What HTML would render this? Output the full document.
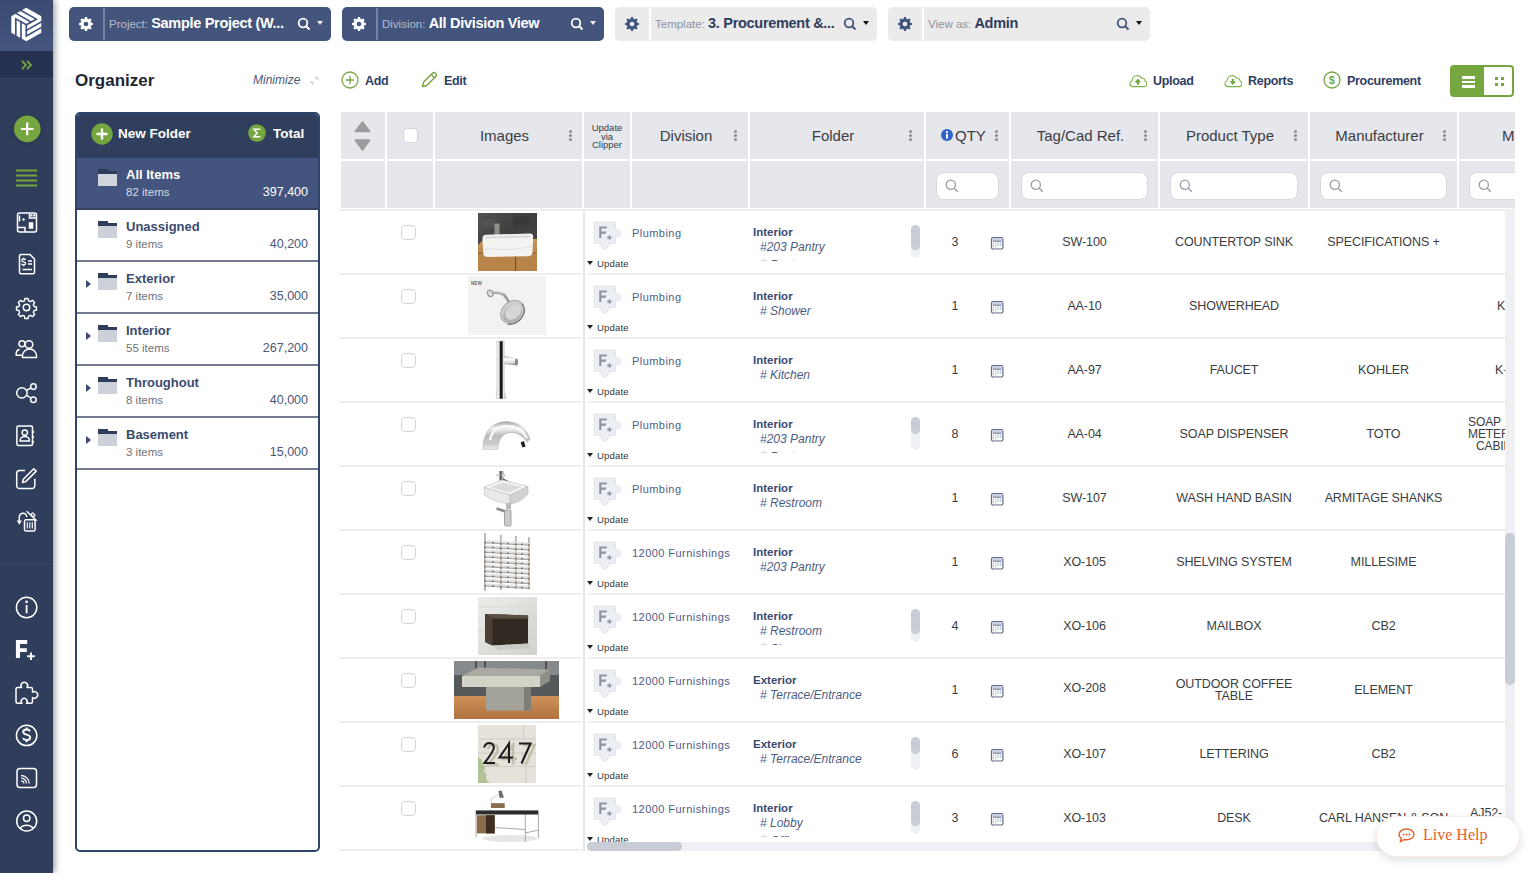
<!DOCTYPE html>
<html><head><meta charset="utf-8">
<style>
*{box-sizing:border-box;margin:0;padding:0}
html,body{width:1536px;height:873px;overflow:hidden;background:#fff;font-family:"Liberation Sans",sans-serif;color:#2b2f38}
.abs{position:absolute}
#sb{position:absolute;left:0;top:0;width:53px;height:873px;background:#303e5c;box-shadow:2px 0 6px rgba(0,0,0,.38);z-index:5}
#sb .logo{position:absolute;left:0;top:0;width:53px;height:51px;background:linear-gradient(#3a4a70,#44567f)}
#sb .band{position:absolute;left:0;top:51px;width:53px;height:27px;background:#253250}
#sb svg{position:absolute}
.pill{position:absolute;top:7px;height:34px;width:262px;border-radius:5px;background:#44557d}
.pill.l{background:#ebebeb}
.pill .gear{position:absolute;left:9px;top:8.5px}
.pill .div{position:absolute;left:34px;top:1px;width:2px;height:32px;background:#7483a3}
.pill.l .div{background:#fff}
.pill .lab{position:absolute;left:40px;top:8px;font-size:11.5px;color:#b4bdd0;white-space:nowrap}
.pill.l .lab{color:#8a93a5}
.pill .val{font-size:14.5px;letter-spacing:-0.3px;font-weight:bold;color:#fff;margin-left:0px}
.pill.l .val{color:#2f3e5f}
.pill .srch{position:absolute;left:228px;top:10px}
.pill .car{position:absolute;left:247.5px;top:14px;width:0;height:0;border-left:3.4px solid transparent;border-right:3.4px solid transparent;border-top:4.2px solid #f0f1f5}
.pill.l .car{border-top-color:#111}
.tb{position:absolute;top:74px;font-size:12.5px;letter-spacing:-0.3px;font-weight:bold;color:#2f3e5f;white-space:nowrap}
.hd{font-size:15px;color:#3a3d44;white-space:nowrap}
.upd{font-size:9.5px;letter-spacing:.2px;color:#333;white-space:nowrap}
.dv{font-size:11px;letter-spacing:.45px;color:#4b5d85;white-space:nowrap}
.fb{font-size:11.5px;font-weight:bold;color:#3a4a70;white-space:nowrap}
.fi{font-size:12px;font-style:italic;color:#4b5d85;white-space:nowrap}
.cell{font-size:12.5px;letter-spacing:-0.1px;color:#3a3d42;white-space:nowrap}
.cell.ml{line-height:11px;white-space:normal}
</style></head><body>

<div id="sb">
  <div class="logo"></div>
  <div class="band"></div>
<!--SB START-->
<svg style="position:absolute;left:0;top:0" width="53" height="873" viewBox="0 0 53 873"><defs><filter id="bl" x="-50%" y="-50%" width="200%" height="200%"><feGaussianBlur stdDeviation="1.5"/></filter></defs>
<g transform="translate(11.3,7.8)">
 <path d="M15 0 30 8.5V25L15 33.5 0 25V8.5z" fill="#fff"/>
 <g fill="none" stroke="#40527b" stroke-width="1.7" stroke-linecap="square">
  <path d="M4.5 28V11.05L15 17V28.3L30.5 19.5"/>
  <path d="M9.7 14V31"/>
  <path d="M15 22.6 30.5 13.8"/>
  <path d="M15 17 25 11.33 9.6 2.6"/>
  <path d="M19.8 14.3 4.6 5.5"/>
 </g>
</g>
<path d="M22 61l4 4-4 4M27 61l4 4-4 4" fill="none" stroke="#75a640" stroke-width="1.8"/>
<circle cx="27.3" cy="129.5" r="15" fill="#1f2a40" opacity=".35" filter="url(#bl)"/>
<circle cx="27.3" cy="128.9" r="13.3" fill="#75a640"/>
<path d="M27.2 122.6v12.7M20.9 129h12.7" stroke="#fff" stroke-width="2.2"/>
<path d="M16 170.5h21M16 175.5h21M16 180.5h21M16 185.5h21" stroke="#75a640" stroke-width="2"/>
<g fill="none" stroke="#fff" stroke-width="1.5">
 <rect x="17.5" y="213" width="19" height="19" rx="2"/>
 <path d="M19.5 215.5v6M17.5 227.5h7.5v4.5M29.5 213.5v4.5h6.5"/><rect x="30.3" y="214.3" width="2.2" height="2.2" fill="#fff" stroke="none"/><rect x="33.2" y="214.3" width="2.2" height="2.2" fill="#fff" stroke="none"/>
 <rect x="29.5" y="223" width="3" height="5" fill="#fff"/>
</g>
<circle cx="23.5" cy="219.5" r="1.2" fill="#fff"/>
<g fill="none" stroke="#fff" stroke-width="1.5">
 <path d="M21 254.5h9l4.5 4.5v13.2a1.5 1.5 0 0 1-1.5 1.5H21a1.5 1.5 0 0 1-1.5-1.5V256a1.5 1.5 0 0 1 1.5-1.5z"/>
 <path d="M28 261h4M28 264h4M22.5 269.5h9.5"/>
</g>
<path d="M25.6 260a2 1.6 0 0 0-1.9-1c-1.1 0-1.9.6-1.9 1.4 0 2 3.8 1 3.8 3 0 .9-.9 1.4-2 1.4a2 1.6 0 0 1-2-1.1M23.7 257.5v1.4M23.7 264.8v1.4" fill="none" stroke="#fff" stroke-width="1.3"/>
<g fill="none" stroke="#fff" stroke-width="1.5">
<g transform="translate(26.5 307.6) scale(.9) translate(-26.5 -307.6)"> <path d="M24.8 297.5h3.4l.6 2.6 2 .9 2.3-1.4 2.4 2.4-1.4 2.3.9 2 2.6.6v3.4l-2.6.6-.9 2 1.4 2.3-2.4 2.4-2.3-1.4-2 .9-.6 2.6h-3.4l-.6-2.6-2-.9-2.3 1.4-2.4-2.4 1.4-2.3-.9-2-2.6-.6v-3.4l2.6-.6.9-2-1.4-2.3 2.4-2.4 2.3 1.4 2-.9z" stroke-linejoin="round" stroke-width="1.65"/>
 <circle cx="26.5" cy="307.6" r="3.6" stroke-width="1.65"/></g>
 <circle cx="22" cy="343.8" r="3"/>
 <path d="M19.5 349.2a5 5 0 0 0-3.3 4.8v1.3h6"/>
 <circle cx="29" cy="344.5" r="3.8"/>
 <path d="M22.5 357.5v-1.5a7 7 0 0 1 14 0v1.5z"/>
 <circle cx="21.9" cy="392.9" r="5.2"/>
 <circle cx="33.4" cy="386.6" r="2.8"/>
 <circle cx="33.4" cy="399.7" r="2.8"/>
 <path d="M26.5 390.4 30.8 388M26.5 395.4 30.8 397.8"/>
 <rect x="16.9" y="426" width="15.6" height="19.5" rx="1.5"/>
 <path d="M33 431v1.8M33 436v1.8M33 441v1.8" stroke-width="2.2"/>
 <circle cx="24.8" cy="432.6" r="2.7"/>
 <path d="M20.2 441v-.6a4.6 4 0 0 1 9.2 0v.6z"/>
 <path d="M25 470.5h-5.5a2.8 2.8 0 0 0-2.8 2.8v12.5a2.8 2.8 0 0 0 2.8 2.8H32a2.8 2.8 0 0 0 2.8-2.8v-7"/>
 <path d="M22.5 482.5l.8-3.3 10.5-10.5 2.4 2.4-10.5 10.5z" stroke-linejoin="round"/>
 <path d="M26.7 517a3.7 3.7 0 0 0-7.4 0v4"/>
 <rect x="24.5" y="519.8" width="10.6" height="11.3" rx="1.6"/>
 <path d="M27.3 522.3v6.3M29.8 522.3v6.3M32.3 522.3v6.3" stroke-width="1.1"/>
 <path d="M26.6 511.3l10.2 9.5"/>
 <rect x="31.3" y="513.6" width="3.6" height="2.4" rx=".6" transform="rotate(43 33.1 514.8)" stroke-width="1.1"/>
</g>
<path d="M16.7 520.6h5.2l-2.6 4.2z" fill="#fff"/>
<g fill="none" stroke="#fff" stroke-width="1.5">
</g>
<rect x="0" y="563.5" width="53" height="1" fill="#3a4866"/>
<g fill="none" stroke="#fff" stroke-width="1.5">
 <circle cx="26.6" cy="607.5" r="10.2"/>
 <path d="M26.6 605v8.3" stroke-width="1.8"/>
 <circle cx="26.6" cy="601.8" r=".6" stroke-width="1.6"/>
</g>
<path d="M15.9 640h11.3v3.9H20v4.3h6.8v3.7H20V658h-4.1z" fill="#fff"/>
<path d="M31 652.5v7.5M27.2 656.3h7.6" stroke="#fff" stroke-width="1.9"/>
<path d="M16 701.8V689a1.5 1.5 0 0 1 1.5-1.5h4.1a3.3 3.3 0 1 1 5.4 0H31a1.5 1.5 0 0 1 1.5 1.5v3.2a3.3 3.3 0 1 1 0 5.4v4.2a1.5 1.5 0 0 1-1.5 1.5h-4.5a3 3 0 1 0-4.6 0h-4.4a1.5 1.5 0 0 1-1.5-1.5z" fill="none" stroke="#fff" stroke-width="1.5" stroke-linejoin="round"/>
<g fill="none" stroke="#fff" stroke-width="1.5">
 <circle cx="26.6" cy="735.4" r="10.2"/>
 <path d="M30 731.3a3.3 2.8 0 0 0-3.4-1.8c-2 0-3.4 1-3.4 2.5 0 3.5 7 1.7 7 5.4 0 1.5-1.5 2.6-3.6 2.6a3.6 3 0 0 1-3.6-2" stroke-width="1.9"/>
 <path d="M26.6 727.5v2M26.6 739.8v2.5" stroke-width="1.9"/>
 <rect x="17" y="768.5" width="19.5" height="19" rx="3"/>
 <path d="M21.2 775.5a8 8 0 0 1 8 8" stroke-width="1.3"/>
 <path d="M21.2 778.2a5.3 5.3 0 0 1 5.3 5.3" stroke-width="1.3"/>
 <path d="M21.2 780.8a2.7 2.7 0 0 1 2.7 2.7" stroke-width="1.3"/>
 <circle cx="26.7" cy="821" r="10"/>
 <circle cx="26.7" cy="818.2" r="3.2"/>
 <path d="M20 828.5a7.5 6 0 0 1 13.4 0"/>
</g>
</svg>
<!--SB END-->
</div>

<!-- top pills -->
<div class="pill" style="left:69px">
  <svg class="gear" width="16" height="16" viewBox="0 0 16 16"><path fill-rule="evenodd" fill="#fff" d="M6.44 2.93 L7.01 1.07 L8.99 1.07 L9.56 2.93 L10.48 3.32 L12.20 2.40 L13.60 3.80 L12.68 5.52 L13.07 6.44 L14.93 7.01 L14.93 8.99 L13.07 9.56 L12.68 10.48 L13.60 12.20 L12.20 13.60 L10.48 12.68 L9.56 13.07 L8.99 14.93 L7.01 14.93 L6.44 13.07 L5.52 12.68 L3.80 13.60 L2.40 12.20 L3.32 10.48 L2.93 9.56 L1.07 8.99 L1.07 7.01 L2.93 6.44 L3.32 5.52 L2.40 3.80 L3.80 2.40 L5.52 3.32z M8 5.7a2.3 2.3 0 1 0 0.001 0z"/></svg>
  <div class="div"></div>
  <div class="lab">Project: <span class="val">Sample Project (W...</span></div>
  <svg class="srch" width="14" height="14" viewBox="0 0 14 14"><circle cx="6" cy="6" r="4.3" fill="none" stroke="#fff" stroke-width="1.8"/><path d="M9.2 9.2 12.5 12.5" stroke="#fff" stroke-width="2"/></svg>
  <div class="car"></div>
</div>
<div class="pill" style="left:342px">
  <svg class="gear" width="16" height="16" viewBox="0 0 16 16"><path fill-rule="evenodd" fill="#fff" d="M6.44 2.93 L7.01 1.07 L8.99 1.07 L9.56 2.93 L10.48 3.32 L12.20 2.40 L13.60 3.80 L12.68 5.52 L13.07 6.44 L14.93 7.01 L14.93 8.99 L13.07 9.56 L12.68 10.48 L13.60 12.20 L12.20 13.60 L10.48 12.68 L9.56 13.07 L8.99 14.93 L7.01 14.93 L6.44 13.07 L5.52 12.68 L3.80 13.60 L2.40 12.20 L3.32 10.48 L2.93 9.56 L1.07 8.99 L1.07 7.01 L2.93 6.44 L3.32 5.52 L2.40 3.80 L3.80 2.40 L5.52 3.32z M8 5.7a2.3 2.3 0 1 0 0.001 0z"/></svg>
  <div class="div"></div>
  <div class="lab">Division: <span class="val">All Division View</span></div>
  <svg class="srch" width="14" height="14" viewBox="0 0 14 14"><circle cx="6" cy="6" r="4.3" fill="none" stroke="#fff" stroke-width="1.8"/><path d="M9.2 9.2 12.5 12.5" stroke="#fff" stroke-width="2"/></svg>
  <div class="car"></div>
</div>
<div class="pill l" style="left:615px">
  <svg class="gear" width="16" height="16" viewBox="0 0 16 16"><path fill-rule="evenodd" fill="#43557d" d="M6.44 2.93 L7.01 1.07 L8.99 1.07 L9.56 2.93 L10.48 3.32 L12.20 2.40 L13.60 3.80 L12.68 5.52 L13.07 6.44 L14.93 7.01 L14.93 8.99 L13.07 9.56 L12.68 10.48 L13.60 12.20 L12.20 13.60 L10.48 12.68 L9.56 13.07 L8.99 14.93 L7.01 14.93 L6.44 13.07 L5.52 12.68 L3.80 13.60 L2.40 12.20 L3.32 10.48 L2.93 9.56 L1.07 8.99 L1.07 7.01 L2.93 6.44 L3.32 5.52 L2.40 3.80 L3.80 2.40 L5.52 3.32z M8 5.7a2.3 2.3 0 1 0 0.001 0z"/></svg>
  <div class="div"></div>
  <div class="lab">Template: <span class="val">3. Procurement &amp;...</span></div>
  <svg class="srch" width="14" height="14" viewBox="0 0 14 14"><circle cx="6" cy="6" r="4.3" fill="none" stroke="#43557d" stroke-width="1.8"/><path d="M9.2 9.2 12.5 12.5" stroke="#43557d" stroke-width="2"/></svg>
  <div class="car"></div>
</div>
<div class="pill l" style="left:888px">
  <svg class="gear" width="16" height="16" viewBox="0 0 16 16"><path fill-rule="evenodd" fill="#43557d" d="M6.44 2.93 L7.01 1.07 L8.99 1.07 L9.56 2.93 L10.48 3.32 L12.20 2.40 L13.60 3.80 L12.68 5.52 L13.07 6.44 L14.93 7.01 L14.93 8.99 L13.07 9.56 L12.68 10.48 L13.60 12.20 L12.20 13.60 L10.48 12.68 L9.56 13.07 L8.99 14.93 L7.01 14.93 L6.44 13.07 L5.52 12.68 L3.80 13.60 L2.40 12.20 L3.32 10.48 L2.93 9.56 L1.07 8.99 L1.07 7.01 L2.93 6.44 L3.32 5.52 L2.40 3.80 L3.80 2.40 L5.52 3.32z M8 5.7a2.3 2.3 0 1 0 0.001 0z"/></svg>
  <div class="div"></div>
  <div class="lab">View as: <span class="val">Admin</span></div>
  <svg class="srch" width="14" height="14" viewBox="0 0 14 14"><circle cx="6" cy="6" r="4.3" fill="none" stroke="#43557d" stroke-width="1.8"/><path d="M9.2 9.2 12.5 12.5" stroke="#43557d" stroke-width="2"/></svg>
  <div class="car"></div>
</div>

<!-- toolbar -->
<div class="abs" style="left:75px;top:71px;font-size:17px;font-weight:bold;color:#1f2633">Organizer</div>


<div class="abs" style="left:253px;top:73px;font-size:12px;font-style:italic;color:#4b5a7d">Minimize</div>
<svg class="abs" style="left:308px;top:74px" width="13" height="13" viewBox="0 0 13 13"><path d="M7.5 1.5v4h4zM5.5 11.5v-4h-4z" fill="#cfd2d8"/></svg>
<svg class="abs" style="left:341px;top:71px" width="18" height="18" viewBox="0 0 18 18"><circle cx="9" cy="9" r="8" fill="none" stroke="#75a640" stroke-width="1.3"/><path d="M9 5v8M5 9h8" stroke="#75a640" stroke-width="1.3"/></svg>
<div class="tb" style="left:365px">Add</div>
<svg class="abs" style="left:420px;top:71px" width="18" height="18" viewBox="0 0 18 18"><path d="M2.5 15.5l1-4.2L12.8 2a1.6 1.6 0 0 1 2.3 0l.9.9a1.6 1.6 0 0 1 0 2.3L6.7 14.5zM11.3 3.5l3.2 3.2" fill="none" stroke="#75a640" stroke-width="1.4" stroke-linejoin="round"/></svg>
<div class="tb" style="left:444px">Edit</div>

<svg class="abs" style="left:1129px;top:72px" width="18" height="16" viewBox="0 0 18 16"><path d="M3.8 14.6a3 3 0 0 1-.6-5.9 5 5 0 0 1 9.3-2.6 3.2 3.2 0 0 1 3.6 2.9 3 3 0 0 1-.6 5.6z" fill="none" stroke="#7ab547" stroke-width="1.1"/><path d="M5.6 10.5 8.8 6.6 12 10.5z" fill="#6aa537"/><rect x="7.8" y="10" width="2" height="2.8" fill="#6aa537"/></svg>
<div class="tb" style="left:1153px">Upload</div>
<svg class="abs" style="left:1224px;top:72px" width="18" height="16" viewBox="0 0 18 16"><path d="M3.8 14.6a3 3 0 0 1-.6-5.9 5 5 0 0 1 9.3-2.6 3.2 3.2 0 0 1 3.6 2.9 3 3 0 0 1-.6 5.6z" fill="none" stroke="#7ab547" stroke-width="1.1"/><path d="M5.6 9.2 8.8 13.1 12 9.2z" fill="#6aa537"/><rect x="7.8" y="6.8" width="2" height="2.8" fill="#6aa537"/></svg>
<div class="tb" style="left:1248px">Reports</div>
<svg class="abs" style="left:1323px;top:71px" width="18" height="18" viewBox="0 0 18 18"><circle cx="9" cy="9" r="8" fill="none" stroke="#75a640" stroke-width="1.3"/><text x="9" y="13" text-anchor="middle" font-family="Liberation Sans" font-weight="bold" font-size="10.5" fill="#75a640">$</text></svg>
<div class="tb" style="left:1347px">Procurement</div>
<div class="abs" style="left:1450px;top:65px;width:64px;height:32px;border:2px solid #75a640;border-radius:4px;background:#fff">
  <div class="abs" style="left:-1px;top:-1px;width:33px;height:30px;background:#75a640;border-radius:2px 0 0 2px"></div>
  <div class="abs" style="left:10px;top:9px;width:13px;height:2.5px;background:#fff"></div>
  <div class="abs" style="left:10px;top:13.5px;width:13px;height:2.5px;background:#fff"></div>
  <div class="abs" style="left:10px;top:18px;width:13px;height:2.5px;background:#fff"></div>
  <div class="abs" style="left:43px;top:10px;width:3px;height:3px;background:#75a640"></div>
  <div class="abs" style="left:49px;top:10px;width:3px;height:3px;background:#75a640"></div>
  <div class="abs" style="left:43px;top:16px;width:3px;height:3px;background:#75a640"></div>
  <div class="abs" style="left:49px;top:16px;width:3px;height:3px;background:#75a640"></div>
</div>

<div id="org" class="abs" style="left:75px;top:112px;width:245px;height:740px;border:2px solid #30456d;border-radius:5px;overflow:hidden;background:#fff">
  <div class="abs" style="left:0;top:0;width:241px;height:44px;background:#313f5e"></div>
  <svg class="abs" style="left:14px;top:9px" width="22" height="22" viewBox="0 0 22 22"><circle cx="11" cy="11" r="10.7" fill="#75a640"/><path d="M11 5.5v11M5.5 11h11" stroke="#fff" stroke-width="2.4"/></svg>
  <div class="abs" style="left:41px;top:12px;font-size:13.5px;font-weight:bold;color:#fff">New Folder</div>
  <svg class="abs" style="left:171px;top:10px" width="18" height="18" viewBox="0 0 18 18"><circle cx="9" cy="9" r="8.8" fill="#75a640"/><path d="M12.3 5.2H5.8L9.2 9 5.8 12.8h6.5" fill="none" stroke="#fff" stroke-width="1.4"/></svg>
  <div class="abs" style="left:196px;top:12px;font-size:13.5px;font-weight:bold;color:#fff">Total</div>
  <div class="abs" style="left:0;top:44px;width:241px;height:52px;background:#43557e;border-bottom:2px solid #36435f"><div class="abs" style="left:21px;top:11px;width:10px;height:3px;background:#2e3c5b"></div><div class="abs" style="left:21px;top:13px;width:19px;height:3px;background:#2e3c5b"></div><div class="abs" style="left:21px;top:16px;width:19px;height:12px;background:#d0d4dc"></div><div class="abs" style="left:49px;top:9px;font-size:13px;font-weight:bold;color:#fff">All Items</div><div class="abs" style="left:49px;top:28px;font-size:11.5px;color:#d6dae3">82 items</div><div class="abs" style="right:10px;top:27px;font-size:12.5px;color:#fff">397,400</div></div><div class="abs" style="left:0;top:96px;width:241px;height:52px;background:#fff;border-bottom:2px solid #737a90"><div class="abs" style="left:21px;top:11px;width:10px;height:3px;background:#2f3d5c"></div><div class="abs" style="left:21px;top:13px;width:19px;height:3px;background:#2f3d5c"></div><div class="abs" style="left:21px;top:16px;width:19px;height:12px;background:#ccd0d8"></div><div class="abs" style="left:49px;top:9px;font-size:13px;font-weight:bold;color:#3b4b70">Unassigned</div><div class="abs" style="left:49px;top:28px;font-size:11.5px;color:#6f7278">9 items</div><div class="abs" style="right:10px;top:27px;font-size:12.5px;color:#4a5878">40,200</div></div><div class="abs" style="left:0;top:148px;width:241px;height:52px;background:#fff;border-bottom:2px solid #737a90"><div class="abs" style="left:9px;top:18px;width:0;height:0;border-top:4px solid transparent;border-bottom:4px solid transparent;border-left:5px solid #3b4b70"></div><div class="abs" style="left:21px;top:11px;width:10px;height:3px;background:#2f3d5c"></div><div class="abs" style="left:21px;top:13px;width:19px;height:3px;background:#2f3d5c"></div><div class="abs" style="left:21px;top:16px;width:19px;height:12px;background:#ccd0d8"></div><div class="abs" style="left:49px;top:9px;font-size:13px;font-weight:bold;color:#3b4b70">Exterior</div><div class="abs" style="left:49px;top:28px;font-size:11.5px;color:#6f7278">7 items</div><div class="abs" style="right:10px;top:27px;font-size:12.5px;color:#4a5878">35,000</div></div><div class="abs" style="left:0;top:200px;width:241px;height:52px;background:#fff;border-bottom:2px solid #737a90"><div class="abs" style="left:9px;top:18px;width:0;height:0;border-top:4px solid transparent;border-bottom:4px solid transparent;border-left:5px solid #3b4b70"></div><div class="abs" style="left:21px;top:11px;width:10px;height:3px;background:#2f3d5c"></div><div class="abs" style="left:21px;top:13px;width:19px;height:3px;background:#2f3d5c"></div><div class="abs" style="left:21px;top:16px;width:19px;height:12px;background:#ccd0d8"></div><div class="abs" style="left:49px;top:9px;font-size:13px;font-weight:bold;color:#3b4b70">Interior</div><div class="abs" style="left:49px;top:28px;font-size:11.5px;color:#6f7278">55 items</div><div class="abs" style="right:10px;top:27px;font-size:12.5px;color:#4a5878">267,200</div></div><div class="abs" style="left:0;top:252px;width:241px;height:52px;background:#fff;border-bottom:2px solid #737a90"><div class="abs" style="left:9px;top:18px;width:0;height:0;border-top:4px solid transparent;border-bottom:4px solid transparent;border-left:5px solid #3b4b70"></div><div class="abs" style="left:21px;top:11px;width:10px;height:3px;background:#2f3d5c"></div><div class="abs" style="left:21px;top:13px;width:19px;height:3px;background:#2f3d5c"></div><div class="abs" style="left:21px;top:16px;width:19px;height:12px;background:#ccd0d8"></div><div class="abs" style="left:49px;top:9px;font-size:13px;font-weight:bold;color:#3b4b70">Throughout</div><div class="abs" style="left:49px;top:28px;font-size:11.5px;color:#6f7278">8 items</div><div class="abs" style="right:10px;top:27px;font-size:12.5px;color:#4a5878">40,000</div></div><div class="abs" style="left:0;top:304px;width:241px;height:52px;background:#fff;border-bottom:2px solid #737a90"><div class="abs" style="left:9px;top:18px;width:0;height:0;border-top:4px solid transparent;border-bottom:4px solid transparent;border-left:5px solid #3b4b70"></div><div class="abs" style="left:21px;top:11px;width:10px;height:3px;background:#2f3d5c"></div><div class="abs" style="left:21px;top:13px;width:19px;height:3px;background:#2f3d5c"></div><div class="abs" style="left:21px;top:16px;width:19px;height:12px;background:#ccd0d8"></div><div class="abs" style="left:49px;top:9px;font-size:13px;font-weight:bold;color:#3b4b70">Basement</div><div class="abs" style="left:49px;top:28px;font-size:11.5px;color:#6f7278">3 items</div><div class="abs" style="right:10px;top:27px;font-size:12.5px;color:#4a5878">15,000</div></div>
</div>


<div class="abs" style="left:1376px;top:816px;width:144px;height:41px;border-radius:21px;background:#fff;box-shadow:0 3px 8px rgba(0,0,0,.13);border:1px solid #fbeee8;z-index:10">
<svg class="abs" style="left:21px;top:11px" width="17" height="15" viewBox="0 0 17 15"><path d="M8.5 1C4.4 1 1 3.4 1 6.4c0 1.6.9 3 2.4 4L2.2 13.8l3.9-2.3c.8.2 1.5.3 2.4.3 4.1 0 7.5-2.4 7.5-5.4S12.6 1 8.5 1z" fill="none" stroke="#e8612c" stroke-width="1.4" stroke-linejoin="round"/><circle cx="5.5" cy="6.4" r="1" fill="#e8612c"/><circle cx="8.5" cy="6.4" r="1" fill="#e8612c"/><circle cx="11.5" cy="6.4" r="1" fill="#e8612c"/></svg>
<div class="abs" style="left:46px;top:9px;font-family:'Liberation Serif',serif;font-size:16px;color:#e8612c;white-space:nowrap">Live Help</div>
</div>
<!--TABLE START-->
<div id="tbl" class="abs" style="left:0;top:0;width:1515px;height:873px;overflow:hidden;pointer-events:none">
<div class="abs" style="left:341px;top:112px;width:44px;height:47px;background:#e6e7ec"></div>
<div class="abs" style="left:341px;top:161px;width:44px;height:47px;background:#e6e7ec"></div>
<div class="abs" style="left:387px;top:112px;width:46px;height:47px;background:#e6e7ec"></div>
<div class="abs" style="left:387px;top:161px;width:46px;height:47px;background:#e6e7ec"></div>
<div class="abs" style="left:435px;top:112px;width:147px;height:47px;background:#e6e7ec"></div>
<div class="abs" style="left:435px;top:161px;width:147px;height:47px;background:#e6e7ec"></div>
<div class="abs" style="left:584px;top:112px;width:46px;height:47px;background:#e6e7ec"></div>
<div class="abs" style="left:584px;top:161px;width:46px;height:47px;background:#e6e7ec"></div>
<div class="abs" style="left:632px;top:112px;width:116px;height:47px;background:#e6e7ec"></div>
<div class="abs" style="left:632px;top:161px;width:116px;height:47px;background:#e6e7ec"></div>
<div class="abs" style="left:750px;top:112px;width:174px;height:47px;background:#e6e7ec"></div>
<div class="abs" style="left:750px;top:161px;width:174px;height:47px;background:#e6e7ec"></div>
<div class="abs" style="left:926px;top:112px;width:83px;height:47px;background:#e6e7ec"></div>
<div class="abs" style="left:926px;top:161px;width:83px;height:47px;background:#e6e7ec"></div>
<div class="abs" style="left:1011px;top:112px;width:147px;height:47px;background:#e6e7ec"></div>
<div class="abs" style="left:1011px;top:161px;width:147px;height:47px;background:#e6e7ec"></div>
<div class="abs" style="left:1160px;top:112px;width:148px;height:47px;background:#e6e7ec"></div>
<div class="abs" style="left:1160px;top:161px;width:148px;height:47px;background:#e6e7ec"></div>
<div class="abs" style="left:1310px;top:112px;width:147px;height:47px;background:#e6e7ec"></div>
<div class="abs" style="left:1310px;top:161px;width:147px;height:47px;background:#e6e7ec"></div>
<div class="abs" style="left:1459px;top:112px;width:101px;height:47px;background:#e6e7ec"></div>
<div class="abs" style="left:1459px;top:161px;width:101px;height:47px;background:#e6e7ec"></div>
<svg class="abs" style="left:353px;top:120px" width="20" height="32" viewBox="0 0 20 32"><path d="M2.2 11.5 9.5 2 16.8 11.5z M2.2 20 9.5 30 16.8 20z" fill="#9c9c9c" stroke="#9c9c9c" stroke-width="1.5" stroke-linejoin="round"/></svg>
<div class="abs" style="left:403px;top:128px;width:15px;height:15px;background:#fff;border:1px solid #d3d6de;border-radius:4px"></div>
<div class="abs hd" style="left:435px;top:127px;width:139px;text-align:center">Images</div>
<div class="abs" style="left:569px;top:130px;width:3px;height:3px;border-radius:2px;background:#8d8d8d;box-shadow:0 4px 0 #8d8d8d,0 8px 0 #8d8d8d"></div>
<div class="abs hd" style="left:632px;top:127px;width:108px;text-align:center">Division</div>
<div class="abs" style="left:734px;top:130px;width:3px;height:3px;border-radius:2px;background:#8d8d8d;box-shadow:0 4px 0 #8d8d8d,0 8px 0 #8d8d8d"></div>
<div class="abs hd" style="left:750px;top:127px;width:166px;text-align:center">Folder</div>
<div class="abs" style="left:909px;top:130px;width:3px;height:3px;border-radius:2px;background:#8d8d8d;box-shadow:0 4px 0 #8d8d8d,0 8px 0 #8d8d8d"></div>
<div class="abs hd" style="left:1011px;top:127px;width:139px;text-align:center">Tag/Cad Ref.</div>
<div class="abs" style="left:1144px;top:130px;width:3px;height:3px;border-radius:2px;background:#8d8d8d;box-shadow:0 4px 0 #8d8d8d,0 8px 0 #8d8d8d"></div>
<div class="abs hd" style="left:1160px;top:127px;width:140px;text-align:center">Product Type</div>
<div class="abs" style="left:1294px;top:130px;width:3px;height:3px;border-radius:2px;background:#8d8d8d;box-shadow:0 4px 0 #8d8d8d,0 8px 0 #8d8d8d"></div>
<div class="abs hd" style="left:1310px;top:127px;width:139px;text-align:center">Manufacturer</div>
<div class="abs" style="left:1443px;top:130px;width:3px;height:3px;border-radius:2px;background:#8d8d8d;box-shadow:0 4px 0 #8d8d8d,0 8px 0 #8d8d8d"></div>
<div class="abs hd" style="left:1502px;top:127px">Ma</div>
<svg class="abs" style="left:941px;top:129px" width="12" height="12" viewBox="0 0 12 12"><circle cx="6" cy="6" r="6" fill="#2f64c4"/><rect x="5" y="5" width="2" height="4.6" fill="#fff"/><circle cx="6" cy="3.2" r="1.1" fill="#fff"/></svg>
<div class="abs hd" style="left:955px;top:127px">QTY</div>
<div class="abs" style="left:995px;top:130px;width:3px;height:3px;border-radius:2px;background:#8d8d8d;box-shadow:0 4px 0 #8d8d8d,0 8px 0 #8d8d8d"></div>
<div class="abs" style="left:584px;top:124px;width:46px;text-align:center;font-size:9.5px;line-height:8.6px;color:#3a3d44">Update<br>via<br>Clipper</div>
<div class="abs" style="left:936px;top:172px;width:63px;height:28px;background:#fff;border:1px solid #d6d9df;border-radius:8px"></div>
<svg class="abs" style="left:945px;top:179px" width="14" height="14" viewBox="0 0 14 14"><circle cx="5.8" cy="5.8" r="4.6" fill="none" stroke="#9aa0aa" stroke-width="1.3"/><path d="M9.2 9.2 12.8 12.8" stroke="#9aa0aa" stroke-width="1.5"/></svg>
<div class="abs" style="left:1021px;top:172px;width:127px;height:28px;background:#fff;border:1px solid #d6d9df;border-radius:8px"></div>
<svg class="abs" style="left:1030px;top:179px" width="14" height="14" viewBox="0 0 14 14"><circle cx="5.8" cy="5.8" r="4.6" fill="none" stroke="#9aa0aa" stroke-width="1.3"/><path d="M9.2 9.2 12.8 12.8" stroke="#9aa0aa" stroke-width="1.5"/></svg>
<div class="abs" style="left:1170px;top:172px;width:128px;height:28px;background:#fff;border:1px solid #d6d9df;border-radius:8px"></div>
<svg class="abs" style="left:1179px;top:179px" width="14" height="14" viewBox="0 0 14 14"><circle cx="5.8" cy="5.8" r="4.6" fill="none" stroke="#9aa0aa" stroke-width="1.3"/><path d="M9.2 9.2 12.8 12.8" stroke="#9aa0aa" stroke-width="1.5"/></svg>
<div class="abs" style="left:1320px;top:172px;width:127px;height:28px;background:#fff;border:1px solid #d6d9df;border-radius:8px"></div>
<svg class="abs" style="left:1329px;top:179px" width="14" height="14" viewBox="0 0 14 14"><circle cx="5.8" cy="5.8" r="4.6" fill="none" stroke="#9aa0aa" stroke-width="1.3"/><path d="M9.2 9.2 12.8 12.8" stroke="#9aa0aa" stroke-width="1.5"/></svg>
<div class="abs" style="left:1469px;top:172px;width:100px;height:28px;background:#fff;border:1px solid #d6d9df;border-radius:8px"></div>
<svg class="abs" style="left:1478px;top:179px" width="14" height="14" viewBox="0 0 14 14"><circle cx="5.8" cy="5.8" r="4.6" fill="none" stroke="#9aa0aa" stroke-width="1.3"/><path d="M9.2 9.2 12.8 12.8" stroke="#9aa0aa" stroke-width="1.5"/></svg>
<div class="abs" style="left:339px;top:209px;width:1176px;height:2px;background:#eceef2"></div>
<div class="abs" style="left:401px;top:225px;width:15px;height:15px;border:1.5px solid #d0d5df;border-radius:4px;background:#fff"></div>
<div class="abs" style="left:435px;top:210px;width:147px;height:64px"><svg class="abs" style="left:43px;top:3px" width="59" height="58" viewBox="0 0 59 58">
<defs><linearGradient id="st" x1="0" y1="0" x2="1" y2="1"><stop offset="0" stop-color="#505250"/><stop offset=".45" stop-color="#3d3f3f"/><stop offset="1" stop-color="#4a4b4a"/></linearGradient>
<linearGradient id="wd" x1="0" y1="0" x2="0" y2="1"><stop offset="0" stop-color="#c8975a"/><stop offset="1" stop-color="#a4743a"/></linearGradient></defs>
<rect width="59" height="58" fill="url(#st)"/>
<rect x="3" y="6" width="14" height="8" fill="#5a5b58" opacity=".5"/><rect x="35" y="3" width="16" height="9" fill="#333534" opacity=".6"/>
<rect x="16.5" y="10.5" width="5" height="12" fill="#8f8f8c"/>
<path d="M0 32 6 26H59V58H0z" fill="url(#wd)"/>
<path d="M0 40H59" stroke="#8d5f2a" stroke-width="1.2"/>
<path d="M0 41H59V58H0z" fill="#b8844a"/>
<path d="M37.5 41V58" stroke="#7d5222" stroke-width="1.3"/>
<path d="M4.5 25.5Q4.5 22 8 21.8L52 20.5Q55.2 20.5 55.2 24L54.5 39.5Q54.3 43 50.5 43.2L9.5 44Q5.5 44 5.2 40z" fill="#f3f3f1"/>
<path d="M7 24.5 52.5 23.5" stroke="#d9d9d6" stroke-width="2"/>
<path d="M5.2 36Q30 38 54.8 34" stroke="#e2e2df" stroke-width="1" fill="none"/>
</svg></div>
<svg class="abs" style="left:593px;top:221px" width="30" height="30" viewBox="0 0 30 30"><path d="M1.2 1.2H22.4V8.6A3.7 3.7 0 1 1 22.4 15.2V22.4H15.2A3.7 3.7 0 1 1 8.6 22.4H1.2z" fill="#eceef3" stroke="#e0e3e9" stroke-width="1"/><path d="M7.3 17V6.5h6.5M7.3 11.6h5.6" fill="none" stroke="#8c93a4" stroke-width="2.1"/><path d="M16.5 14.2v4.6M14.2 16.5h4.6" stroke="#8c93a4" stroke-width="1.5"/></svg>
<div class="abs" style="left:587px;top:261px;width:0;height:0;border-left:3.5px solid transparent;border-right:3.5px solid transparent;border-top:4px solid #222"></div>
<div class="abs upd" style="left:597px;top:258px">Update</div>
<div class="abs dv" style="left:632px;top:227px">Plumbing</div>
<div class="abs fb" style="left:753px;top:226px">Interior</div>
<div class="abs fi" style="left:760px;top:240px">#203 Pantry</div>
<div class="abs" style="left:760px;top:258px;height:3px;overflow:hidden"><div class="fi" style="position:relative;top:-0px"># Restroom</div></div>
<div class="abs" style="left:911px;top:225px;width:9px;height:33px;border-radius:5px;background:#eef0f3"></div>
<div class="abs" style="left:911px;top:225px;width:9px;height:25px;border-radius:5px;background:#c8ccd4"></div>
<div class="abs cell" style="left:926px;top:235px;width:58px;text-align:center">3</div>
<svg class="abs" style="left:990px;top:236px" width="14" height="14" viewBox="0 0 14 14"><rect x="1.5" y="1.6" width="11.4" height="11.4" rx="1.6" fill="#fff" stroke="#5d6c8c" stroke-width="1.2"/><rect x="2.1" y="2.2" width="10.2" height="2.6" fill="#c9d1de"/><path d="M3 5.2h8.4" stroke="#5d6c8c" stroke-width="1"/><path d="M2.8 7.2h1M5.2 7.2h1M7.3 7.2h1.6M10 7.2h1M2.8 9h1M5.2 9h1M7.3 9h1.6M10 9h1M2.8 10.8h1M5.2 10.8h1" stroke="#8a97b2" stroke-width=".9"/></svg>
<div class="abs cell" style="left:1011px;top:235px;width:147px;text-align:center">SW-100</div>
<div class="abs cell" style="left:1160px;top:235px;width:148px;text-align:center">COUNTERTOP SINK</div>
<div class="abs cell" style="left:1310px;top:235px;width:147px;text-align:center;white-space:nowrap">SPECIFICATIONS +</div>
<div class="abs" style="left:339px;top:273px;width:243px;height:2px;background:#eceef2"></div>
<div class="abs" style="left:587px;top:273px;width:928px;height:2px;background:#eceef2"></div>
<div class="abs" style="left:401px;top:289px;width:15px;height:15px;border:1.5px solid #d0d5df;border-radius:4px;background:#fff"></div>
<div class="abs" style="left:435px;top:274px;width:147px;height:64px"><svg class="abs" style="left:33px;top:2px" width="78" height="59" viewBox="0 0 78 59">
<rect width="78" height="59" fill="#f2f2f2"/>
<text x="3" y="8.5" font-family="Liberation Sans" font-weight="bold" font-size="4.6" fill="#6a6a6a">NEW</text>
<path d="M22.5 16.5Q33 16 36 19Q39 22 43 30" fill="none" stroke="#9d9d9d" stroke-width="2.8"/>
<path d="M23 15.8Q32 15.2 35.5 18" fill="none" stroke="#e6e6e6" stroke-width="1"/>
<ellipse cx="22.2" cy="17.4" rx="2.6" ry="3.4" transform="rotate(-30 22.2 17.4)" fill="#dcdcdc" stroke="#8a8a8a" stroke-width="1"/>
<g transform="rotate(-42 44.5 36)">
<ellipse cx="44.5" cy="36" rx="13" ry="10.5" fill="#cfcfcf" stroke="#9a9a9a" stroke-width=".8"/>
<ellipse cx="43.5" cy="37.5" rx="10.5" ry="8" fill="#b0b0b0"/>
<ellipse cx="45" cy="36.5" rx="9" ry="6.5" fill="#d6d6d6"/>
<path d="M57 36A13 10.5 0 0 1 33 42" fill="none" stroke="#6d6d6d" stroke-width="1.2"/>
</g>
</svg></div>
<svg class="abs" style="left:593px;top:285px" width="30" height="30" viewBox="0 0 30 30"><path d="M1.2 1.2H22.4V8.6A3.7 3.7 0 1 1 22.4 15.2V22.4H15.2A3.7 3.7 0 1 1 8.6 22.4H1.2z" fill="#eceef3" stroke="#e0e3e9" stroke-width="1"/><path d="M7.3 17V6.5h6.5M7.3 11.6h5.6" fill="none" stroke="#8c93a4" stroke-width="2.1"/><path d="M16.5 14.2v4.6M14.2 16.5h4.6" stroke="#8c93a4" stroke-width="1.5"/></svg>
<div class="abs" style="left:587px;top:325px;width:0;height:0;border-left:3.5px solid transparent;border-right:3.5px solid transparent;border-top:4px solid #222"></div>
<div class="abs upd" style="left:597px;top:322px">Update</div>
<div class="abs dv" style="left:632px;top:291px">Plumbing</div>
<div class="abs fb" style="left:753px;top:290px">Interior</div>
<div class="abs fi" style="left:760px;top:304px"># Shower</div>
<div class="abs cell" style="left:926px;top:299px;width:58px;text-align:center">1</div>
<svg class="abs" style="left:990px;top:300px" width="14" height="14" viewBox="0 0 14 14"><rect x="1.5" y="1.6" width="11.4" height="11.4" rx="1.6" fill="#fff" stroke="#5d6c8c" stroke-width="1.2"/><rect x="2.1" y="2.2" width="10.2" height="2.6" fill="#c9d1de"/><path d="M3 5.2h8.4" stroke="#5d6c8c" stroke-width="1"/><path d="M2.8 7.2h1M5.2 7.2h1M7.3 7.2h1.6M10 7.2h1M2.8 9h1M5.2 9h1M7.3 9h1.6M10 9h1M2.8 10.8h1M5.2 10.8h1" stroke="#8a97b2" stroke-width=".9"/></svg>
<div class="abs cell" style="left:1011px;top:299px;width:147px;text-align:center">AA-10</div>
<div class="abs cell" style="left:1160px;top:299px;width:148px;text-align:center">SHOWERHEAD</div>
<div class="abs cell" style="left:1310px;top:299px;width:147px;text-align:center;white-space:nowrap"></div>
<div class="abs cell" style="left:1497px;top:299px">K</div>
<div class="abs" style="left:339px;top:337px;width:243px;height:2px;background:#eceef2"></div>
<div class="abs" style="left:587px;top:337px;width:928px;height:2px;background:#eceef2"></div>
<div class="abs" style="left:401px;top:353px;width:15px;height:15px;border:1.5px solid #d0d5df;border-radius:4px;background:#fff"></div>
<div class="abs" style="left:435px;top:338px;width:147px;height:64px"><svg class="abs" style="left:60px;top:2px" width="24" height="59" viewBox="0 0 24 59">
<defs><linearGradient id="ch" x1="0" x2="1"><stop offset="0" stop-color="#d8d8d8"/><stop offset=".2" stop-color="#fafafa"/><stop offset=".38" stop-color="#9a9a9a"/><stop offset=".45" stop-color="#111"/><stop offset=".62" stop-color="#222"/><stop offset=".75" stop-color="#eee"/><stop offset="1" stop-color="#bbb"/></linearGradient>
<linearGradient id="ch2" x1="0" y1="0" x2="0" y2="1"><stop offset="0" stop-color="#aaa"/><stop offset=".35" stop-color="#fff"/><stop offset=".7" stop-color="#ddd"/><stop offset="1" stop-color="#888"/></linearGradient></defs>
<path d="M1.9 1H9.2V50Q10.6 54 10.8 58.9H1.2Q1.2 54 1.9 50z" fill="url(#ch)" stroke="#c4c4c4" stroke-width=".6"/>
<path d="M8.5 15.5 21.5 18.5V25.5L8.5 24z" fill="url(#ch2)"/>
<ellipse cx="21.5" cy="22" rx="1.6" ry="3.4" fill="#8a8a8a"/>
</svg></div>
<svg class="abs" style="left:593px;top:349px" width="30" height="30" viewBox="0 0 30 30"><path d="M1.2 1.2H22.4V8.6A3.7 3.7 0 1 1 22.4 15.2V22.4H15.2A3.7 3.7 0 1 1 8.6 22.4H1.2z" fill="#eceef3" stroke="#e0e3e9" stroke-width="1"/><path d="M7.3 17V6.5h6.5M7.3 11.6h5.6" fill="none" stroke="#8c93a4" stroke-width="2.1"/><path d="M16.5 14.2v4.6M14.2 16.5h4.6" stroke="#8c93a4" stroke-width="1.5"/></svg>
<div class="abs" style="left:587px;top:389px;width:0;height:0;border-left:3.5px solid transparent;border-right:3.5px solid transparent;border-top:4px solid #222"></div>
<div class="abs upd" style="left:597px;top:386px">Update</div>
<div class="abs dv" style="left:632px;top:355px">Plumbing</div>
<div class="abs fb" style="left:753px;top:354px">Interior</div>
<div class="abs fi" style="left:760px;top:368px"># Kitchen</div>
<div class="abs cell" style="left:926px;top:363px;width:58px;text-align:center">1</div>
<svg class="abs" style="left:990px;top:364px" width="14" height="14" viewBox="0 0 14 14"><rect x="1.5" y="1.6" width="11.4" height="11.4" rx="1.6" fill="#fff" stroke="#5d6c8c" stroke-width="1.2"/><rect x="2.1" y="2.2" width="10.2" height="2.6" fill="#c9d1de"/><path d="M3 5.2h8.4" stroke="#5d6c8c" stroke-width="1"/><path d="M2.8 7.2h1M5.2 7.2h1M7.3 7.2h1.6M10 7.2h1M2.8 9h1M5.2 9h1M7.3 9h1.6M10 9h1M2.8 10.8h1M5.2 10.8h1" stroke="#8a97b2" stroke-width=".9"/></svg>
<div class="abs cell" style="left:1011px;top:363px;width:147px;text-align:center">AA-97</div>
<div class="abs cell" style="left:1160px;top:363px;width:148px;text-align:center">FAUCET</div>
<div class="abs cell" style="left:1310px;top:363px;width:147px;text-align:center;white-space:nowrap">KOHLER</div>
<div class="abs cell" style="left:1495px;top:363px">K-</div>
<div class="abs" style="left:339px;top:401px;width:243px;height:2px;background:#eceef2"></div>
<div class="abs" style="left:587px;top:401px;width:928px;height:2px;background:#eceef2"></div>
<div class="abs" style="left:401px;top:417px;width:15px;height:15px;border:1.5px solid #d0d5df;border-radius:4px;background:#fff"></div>
<div class="abs" style="left:435px;top:402px;width:147px;height:64px"><svg class="abs" style="left:47px;top:18px" width="50" height="32" viewBox="0 0 50 32">
<defs><linearGradient id="sp" x1="0" y1="0" x2="0" y2="1"><stop offset="0" stop-color="#a9a9a9"/><stop offset=".25" stop-color="#f2f2f2"/><stop offset=".5" stop-color="#bdbdbd"/><stop offset=".8" stop-color="#c9c9c9"/><stop offset="1" stop-color="#f0f0f0"/></linearGradient></defs>
<path d="M1 29.3C1 12 10 2 24 1.6C36 1.5 45 9 48 19.2L45 22C40 15 34 12 28 12.5C22 13 16.5 18 15.7 29.3z" fill="url(#sp)" stroke="#b0b0b0" stroke-width=".6"/>
<path d="M8 20C10 10 17 6 24 6C34 6 41 11 45 18" fill="none" stroke="#fafafa" stroke-width="2.5"/>
<path d="M38.6 22.5 42 21 43.5 26.5 40.5 27.5z" fill="#1e1e1e"/>
</svg></div>
<svg class="abs" style="left:593px;top:413px" width="30" height="30" viewBox="0 0 30 30"><path d="M1.2 1.2H22.4V8.6A3.7 3.7 0 1 1 22.4 15.2V22.4H15.2A3.7 3.7 0 1 1 8.6 22.4H1.2z" fill="#eceef3" stroke="#e0e3e9" stroke-width="1"/><path d="M7.3 17V6.5h6.5M7.3 11.6h5.6" fill="none" stroke="#8c93a4" stroke-width="2.1"/><path d="M16.5 14.2v4.6M14.2 16.5h4.6" stroke="#8c93a4" stroke-width="1.5"/></svg>
<div class="abs" style="left:587px;top:453px;width:0;height:0;border-left:3.5px solid transparent;border-right:3.5px solid transparent;border-top:4px solid #222"></div>
<div class="abs upd" style="left:597px;top:450px">Update</div>
<div class="abs dv" style="left:632px;top:419px">Plumbing</div>
<div class="abs fb" style="left:753px;top:418px">Interior</div>
<div class="abs fi" style="left:760px;top:432px">#203 Pantry</div>
<div class="abs" style="left:760px;top:450px;height:3px;overflow:hidden"><div class="fi" style="position:relative;top:-0px"># Restroom</div></div>
<div class="abs" style="left:911px;top:417px;width:9px;height:33px;border-radius:5px;background:#eef0f3"></div>
<div class="abs" style="left:911px;top:417px;width:9px;height:17px;border-radius:5px;background:#c8ccd4"></div>
<div class="abs cell" style="left:926px;top:427px;width:58px;text-align:center">8</div>
<svg class="abs" style="left:990px;top:428px" width="14" height="14" viewBox="0 0 14 14"><rect x="1.5" y="1.6" width="11.4" height="11.4" rx="1.6" fill="#fff" stroke="#5d6c8c" stroke-width="1.2"/><rect x="2.1" y="2.2" width="10.2" height="2.6" fill="#c9d1de"/><path d="M3 5.2h8.4" stroke="#5d6c8c" stroke-width="1"/><path d="M2.8 7.2h1M5.2 7.2h1M7.3 7.2h1.6M10 7.2h1M2.8 9h1M5.2 9h1M7.3 9h1.6M10 9h1M2.8 10.8h1M5.2 10.8h1" stroke="#8a97b2" stroke-width=".9"/></svg>
<div class="abs cell" style="left:1011px;top:427px;width:147px;text-align:center">AA-04</div>
<div class="abs cell" style="left:1160px;top:427px;width:148px;text-align:center">SOAP DISPENSER</div>
<div class="abs cell" style="left:1310px;top:427px;width:147px;text-align:center;white-space:nowrap">TOTO</div>
<div class="abs cell" style="left:1468px;top:417px;line-height:11.8px;font-size:12px">SOAP<br>METER<br><span style="padding-left:8px">CABINET</span></div>
<div class="abs" style="left:339px;top:465px;width:243px;height:2px;background:#eceef2"></div>
<div class="abs" style="left:587px;top:465px;width:928px;height:2px;background:#eceef2"></div>
<div class="abs" style="left:401px;top:481px;width:15px;height:15px;border:1.5px solid #d0d5df;border-radius:4px;background:#fff"></div>
<div class="abs" style="left:435px;top:466px;width:147px;height:64px"><svg class="abs" style="left:48px;top:5px" width="48" height="56" viewBox="0 0 48 56">
<rect x="16" y="0" width="4.5" height="10" fill="#a8a8a8"/><rect x="13.5" y="3" width="9" height="2.5" fill="#cfcfcf"/><rect x="17" y="0" width="1.5" height="10" fill="#555"/>
<path d="M20 8.5 26.5 12" stroke="#444" stroke-width="2"/>
<path d="M1 16.5 19 9 45 15.5 27 24z" fill="#f6f6f6" stroke="#c9c9c9" stroke-width=".8"/>
<path d="M7 16.5 19.5 11.5 39 16 26.5 21.5z" fill="#dcdcdc"/>
<path d="M1 16.5 27 24V33Q10 31 1.5 24z" fill="#e9e9e9" stroke="#c6c6c6" stroke-width=".7"/>
<path d="M27 24 45 15.5V23Q38 31 27 33z" fill="#d2d2d2" stroke="#bdbdbd" stroke-width=".7"/>
<rect x="23" y="32" width="5" height="6" fill="#bcbcbc"/>
<path d="M13.5 37.5 24 41" stroke="#8a8a8a" stroke-width="2.6"/>
<rect x="21.5" y="39" width="6.5" height="16" rx="1.5" fill="#cdcdcd" stroke="#858585" stroke-width=".7"/>
</svg></div>
<svg class="abs" style="left:593px;top:477px" width="30" height="30" viewBox="0 0 30 30"><path d="M1.2 1.2H22.4V8.6A3.7 3.7 0 1 1 22.4 15.2V22.4H15.2A3.7 3.7 0 1 1 8.6 22.4H1.2z" fill="#eceef3" stroke="#e0e3e9" stroke-width="1"/><path d="M7.3 17V6.5h6.5M7.3 11.6h5.6" fill="none" stroke="#8c93a4" stroke-width="2.1"/><path d="M16.5 14.2v4.6M14.2 16.5h4.6" stroke="#8c93a4" stroke-width="1.5"/></svg>
<div class="abs" style="left:587px;top:517px;width:0;height:0;border-left:3.5px solid transparent;border-right:3.5px solid transparent;border-top:4px solid #222"></div>
<div class="abs upd" style="left:597px;top:514px">Update</div>
<div class="abs dv" style="left:632px;top:483px">Plumbing</div>
<div class="abs fb" style="left:753px;top:482px">Interior</div>
<div class="abs fi" style="left:760px;top:496px"># Restroom</div>
<div class="abs cell" style="left:926px;top:491px;width:58px;text-align:center">1</div>
<svg class="abs" style="left:990px;top:492px" width="14" height="14" viewBox="0 0 14 14"><rect x="1.5" y="1.6" width="11.4" height="11.4" rx="1.6" fill="#fff" stroke="#5d6c8c" stroke-width="1.2"/><rect x="2.1" y="2.2" width="10.2" height="2.6" fill="#c9d1de"/><path d="M3 5.2h8.4" stroke="#5d6c8c" stroke-width="1"/><path d="M2.8 7.2h1M5.2 7.2h1M7.3 7.2h1.6M10 7.2h1M2.8 9h1M5.2 9h1M7.3 9h1.6M10 9h1M2.8 10.8h1M5.2 10.8h1" stroke="#8a97b2" stroke-width=".9"/></svg>
<div class="abs cell" style="left:1011px;top:491px;width:147px;text-align:center">SW-107</div>
<div class="abs cell" style="left:1160px;top:491px;width:148px;text-align:center">WASH HAND BASIN</div>
<div class="abs cell" style="left:1310px;top:491px;width:147px;text-align:center;white-space:nowrap">ARMITAGE SHANKS</div>
<div class="abs" style="left:339px;top:529px;width:243px;height:2px;background:#eceef2"></div>
<div class="abs" style="left:587px;top:529px;width:928px;height:2px;background:#eceef2"></div>
<div class="abs" style="left:401px;top:545px;width:15px;height:15px;border:1.5px solid #d0d5df;border-radius:4px;background:#fff"></div>
<div class="abs" style="left:435px;top:530px;width:147px;height:64px"><svg class="abs" style="left:49px;top:3px" width="46" height="59" viewBox="0 0 46 59"><path d="M1 0V58" stroke="#9a9a9a" stroke-width="1.6"/><path d="M1 0V58" stroke="#d8d8d8" stroke-width=".6"/><path d="M16.8 2V57" stroke="#9a9a9a" stroke-width="1.6"/><path d="M16.8 2V57" stroke="#d8d8d8" stroke-width=".6"/><path d="M31.8 3V55" stroke="#9a9a9a" stroke-width="1.6"/><path d="M31.8 3V55" stroke="#d8d8d8" stroke-width=".6"/><path d="M44.8 4V54" stroke="#9a9a9a" stroke-width="1.6"/><path d="M44.8 4V54" stroke="#d8d8d8" stroke-width=".6"/><path d="M1 8.5L45 11.0" stroke="#e2e2e2" stroke-width="2.8"/><path d="M1 9.8L45 12.3" stroke="#8c8c8c" stroke-width=".8"/><rect x="0.0" y="8.3" width="2" height="2.2" fill="#9a8672"/><rect x="15.8" y="9.2" width="2" height="2.2" fill="#9a8672"/><rect x="30.8" y="10.1" width="2" height="2.2" fill="#9a8672"/><rect x="43.8" y="10.8" width="2" height="2.2" fill="#9a8672"/><rect x="8.2" y="9.0" width="1.6" height="1.4" fill="#6a6a6a"/><rect x="23.2" y="9.8" width="1.6" height="1.4" fill="#6a6a6a"/><rect x="37.2" y="10.6" width="1.6" height="1.4" fill="#6a6a6a"/><path d="M1 13.3L45 15.8" stroke="#e2e2e2" stroke-width="2.8"/><path d="M1 14.6L45 17.1" stroke="#8c8c8c" stroke-width=".8"/><rect x="0.0" y="13.1" width="2" height="2.2" fill="#9a8672"/><rect x="15.8" y="14.0" width="2" height="2.2" fill="#9a8672"/><rect x="30.8" y="14.9" width="2" height="2.2" fill="#9a8672"/><rect x="43.8" y="15.6" width="2" height="2.2" fill="#9a8672"/><rect x="8.2" y="13.8" width="1.6" height="1.4" fill="#6a6a6a"/><rect x="23.2" y="14.6" width="1.6" height="1.4" fill="#6a6a6a"/><rect x="37.2" y="15.4" width="1.6" height="1.4" fill="#6a6a6a"/><path d="M1 18.1L45 20.6" stroke="#e2e2e2" stroke-width="2.8"/><path d="M1 19.4L45 21.9" stroke="#8c8c8c" stroke-width=".8"/><rect x="0.0" y="17.9" width="2" height="2.2" fill="#9a8672"/><rect x="15.8" y="18.8" width="2" height="2.2" fill="#9a8672"/><rect x="30.8" y="19.7" width="2" height="2.2" fill="#9a8672"/><rect x="43.8" y="20.4" width="2" height="2.2" fill="#9a8672"/><rect x="8.2" y="18.6" width="1.6" height="1.4" fill="#6a6a6a"/><rect x="23.2" y="19.4" width="1.6" height="1.4" fill="#6a6a6a"/><rect x="37.2" y="20.2" width="1.6" height="1.4" fill="#6a6a6a"/><path d="M1 22.9L45 25.4" stroke="#e2e2e2" stroke-width="2.8"/><path d="M1 24.2L45 26.7" stroke="#8c8c8c" stroke-width=".8"/><rect x="0.0" y="22.7" width="2" height="2.2" fill="#9a8672"/><rect x="15.8" y="23.6" width="2" height="2.2" fill="#9a8672"/><rect x="30.8" y="24.4" width="2" height="2.2" fill="#9a8672"/><rect x="43.8" y="25.2" width="2" height="2.2" fill="#9a8672"/><rect x="8.2" y="23.4" width="1.6" height="1.4" fill="#6a6a6a"/><rect x="23.2" y="24.2" width="1.6" height="1.4" fill="#6a6a6a"/><rect x="37.2" y="25.0" width="1.6" height="1.4" fill="#6a6a6a"/><path d="M1 27.7L45 30.2" stroke="#e2e2e2" stroke-width="2.8"/><path d="M1 29.0L45 31.5" stroke="#8c8c8c" stroke-width=".8"/><rect x="0.0" y="27.5" width="2" height="2.2" fill="#9a8672"/><rect x="15.8" y="28.4" width="2" height="2.2" fill="#9a8672"/><rect x="30.8" y="29.2" width="2" height="2.2" fill="#9a8672"/><rect x="43.8" y="30.0" width="2" height="2.2" fill="#9a8672"/><rect x="8.2" y="28.2" width="1.6" height="1.4" fill="#6a6a6a"/><rect x="23.2" y="29.0" width="1.6" height="1.4" fill="#6a6a6a"/><rect x="37.2" y="29.8" width="1.6" height="1.4" fill="#6a6a6a"/><path d="M1 32.5L45 35.0" stroke="#e2e2e2" stroke-width="2.8"/><path d="M1 33.8L45 36.3" stroke="#8c8c8c" stroke-width=".8"/><rect x="0.0" y="32.3" width="2" height="2.2" fill="#9a8672"/><rect x="15.8" y="33.2" width="2" height="2.2" fill="#9a8672"/><rect x="30.8" y="34.0" width="2" height="2.2" fill="#9a8672"/><rect x="43.8" y="34.8" width="2" height="2.2" fill="#9a8672"/><rect x="8.2" y="33.0" width="1.6" height="1.4" fill="#6a6a6a"/><rect x="23.2" y="33.8" width="1.6" height="1.4" fill="#6a6a6a"/><rect x="37.2" y="34.6" width="1.6" height="1.4" fill="#6a6a6a"/><path d="M1 37.3L45 39.8" stroke="#e2e2e2" stroke-width="2.8"/><path d="M1 38.6L45 41.1" stroke="#8c8c8c" stroke-width=".8"/><rect x="0.0" y="37.1" width="2" height="2.2" fill="#9a8672"/><rect x="15.8" y="38.0" width="2" height="2.2" fill="#9a8672"/><rect x="30.8" y="38.8" width="2" height="2.2" fill="#9a8672"/><rect x="43.8" y="39.6" width="2" height="2.2" fill="#9a8672"/><rect x="8.2" y="37.8" width="1.6" height="1.4" fill="#6a6a6a"/><rect x="23.2" y="38.6" width="1.6" height="1.4" fill="#6a6a6a"/><rect x="37.2" y="39.4" width="1.6" height="1.4" fill="#6a6a6a"/><path d="M1 42.1L45 44.6" stroke="#e2e2e2" stroke-width="2.8"/><path d="M1 43.4L45 45.9" stroke="#8c8c8c" stroke-width=".8"/><rect x="0.0" y="41.9" width="2" height="2.2" fill="#9a8672"/><rect x="15.8" y="42.8" width="2" height="2.2" fill="#9a8672"/><rect x="30.8" y="43.6" width="2" height="2.2" fill="#9a8672"/><rect x="43.8" y="44.4" width="2" height="2.2" fill="#9a8672"/><rect x="8.2" y="42.6" width="1.6" height="1.4" fill="#6a6a6a"/><rect x="23.2" y="43.4" width="1.6" height="1.4" fill="#6a6a6a"/><rect x="37.2" y="44.2" width="1.6" height="1.4" fill="#6a6a6a"/><path d="M1 46.9L45 49.4" stroke="#e2e2e2" stroke-width="2.8"/><path d="M1 48.2L45 50.7" stroke="#8c8c8c" stroke-width=".8"/><rect x="0.0" y="46.7" width="2" height="2.2" fill="#9a8672"/><rect x="15.8" y="47.6" width="2" height="2.2" fill="#9a8672"/><rect x="30.8" y="48.4" width="2" height="2.2" fill="#9a8672"/><rect x="43.8" y="49.2" width="2" height="2.2" fill="#9a8672"/><rect x="8.2" y="47.4" width="1.6" height="1.4" fill="#6a6a6a"/><rect x="23.2" y="48.2" width="1.6" height="1.4" fill="#6a6a6a"/><rect x="37.2" y="49.0" width="1.6" height="1.4" fill="#6a6a6a"/><path d="M1 51.7L45 54.2" stroke="#e2e2e2" stroke-width="2.8"/><path d="M1 53.0L45 55.5" stroke="#8c8c8c" stroke-width=".8"/><rect x="0.0" y="51.5" width="2" height="2.2" fill="#9a8672"/><rect x="15.8" y="52.4" width="2" height="2.2" fill="#9a8672"/><rect x="30.8" y="53.2" width="2" height="2.2" fill="#9a8672"/><rect x="43.8" y="54.0" width="2" height="2.2" fill="#9a8672"/><rect x="8.2" y="52.2" width="1.6" height="1.4" fill="#6a6a6a"/><rect x="23.2" y="53.0" width="1.6" height="1.4" fill="#6a6a6a"/><rect x="37.2" y="53.8" width="1.6" height="1.4" fill="#6a6a6a"/></svg></div>
<svg class="abs" style="left:593px;top:541px" width="30" height="30" viewBox="0 0 30 30"><path d="M1.2 1.2H22.4V8.6A3.7 3.7 0 1 1 22.4 15.2V22.4H15.2A3.7 3.7 0 1 1 8.6 22.4H1.2z" fill="#eceef3" stroke="#e0e3e9" stroke-width="1"/><path d="M7.3 17V6.5h6.5M7.3 11.6h5.6" fill="none" stroke="#8c93a4" stroke-width="2.1"/><path d="M16.5 14.2v4.6M14.2 16.5h4.6" stroke="#8c93a4" stroke-width="1.5"/></svg>
<div class="abs" style="left:587px;top:581px;width:0;height:0;border-left:3.5px solid transparent;border-right:3.5px solid transparent;border-top:4px solid #222"></div>
<div class="abs upd" style="left:597px;top:578px">Update</div>
<div class="abs dv" style="left:632px;top:547px">12000 Furnishings</div>
<div class="abs fb" style="left:753px;top:546px">Interior</div>
<div class="abs fi" style="left:760px;top:560px">#203 Pantry</div>
<div class="abs cell" style="left:926px;top:555px;width:58px;text-align:center">1</div>
<svg class="abs" style="left:990px;top:556px" width="14" height="14" viewBox="0 0 14 14"><rect x="1.5" y="1.6" width="11.4" height="11.4" rx="1.6" fill="#fff" stroke="#5d6c8c" stroke-width="1.2"/><rect x="2.1" y="2.2" width="10.2" height="2.6" fill="#c9d1de"/><path d="M3 5.2h8.4" stroke="#5d6c8c" stroke-width="1"/><path d="M2.8 7.2h1M5.2 7.2h1M7.3 7.2h1.6M10 7.2h1M2.8 9h1M5.2 9h1M7.3 9h1.6M10 9h1M2.8 10.8h1M5.2 10.8h1" stroke="#8a97b2" stroke-width=".9"/></svg>
<div class="abs cell" style="left:1011px;top:555px;width:147px;text-align:center">XO-105</div>
<div class="abs cell" style="left:1160px;top:555px;width:148px;text-align:center">SHELVING SYSTEM</div>
<div class="abs cell" style="left:1310px;top:555px;width:147px;text-align:center;white-space:nowrap">MILLESIME</div>
<div class="abs" style="left:339px;top:593px;width:243px;height:2px;background:#eceef2"></div>
<div class="abs" style="left:587px;top:593px;width:928px;height:2px;background:#eceef2"></div>
<div class="abs" style="left:401px;top:609px;width:15px;height:15px;border:1.5px solid #d0d5df;border-radius:4px;background:#fff"></div>
<div class="abs" style="left:435px;top:594px;width:147px;height:64px"><svg class="abs" style="left:43px;top:3px" width="59" height="58" viewBox="0 0 59 58">
<defs><linearGradient id="mb" x1="0" y1="0" x2="1" y2="1"><stop offset="0" stop-color="#ecece9"/><stop offset="1" stop-color="#d2d2cc"/></linearGradient></defs>
<rect width="59" height="58" fill="url(#mb)"/>
<g stroke="#d8d8d4" stroke-width=".8"><path d="M0 10H59M0 22H59M0 34H59M0 46H59M20 0V10M42 10V22M18 22V34M40 34V46"/></g>
<path d="M7 17 50 18.5 50 46.5 14.5 48.5 7 45z" fill="#322a22"/>
<path d="M7 17 50 18.5 50.5 21.5 14.5 21.5z" fill="#5a5045"/>
<path d="M7 17 14.5 21.5V48.5L7 45z" fill="#4a4036"/>
<path d="M14.5 48.5 50 46.5 53 51 20 53z" fill="#c8c8c2" opacity=".8"/>
</svg></div>
<svg class="abs" style="left:593px;top:605px" width="30" height="30" viewBox="0 0 30 30"><path d="M1.2 1.2H22.4V8.6A3.7 3.7 0 1 1 22.4 15.2V22.4H15.2A3.7 3.7 0 1 1 8.6 22.4H1.2z" fill="#eceef3" stroke="#e0e3e9" stroke-width="1"/><path d="M7.3 17V6.5h6.5M7.3 11.6h5.6" fill="none" stroke="#8c93a4" stroke-width="2.1"/><path d="M16.5 14.2v4.6M14.2 16.5h4.6" stroke="#8c93a4" stroke-width="1.5"/></svg>
<div class="abs" style="left:587px;top:645px;width:0;height:0;border-left:3.5px solid transparent;border-right:3.5px solid transparent;border-top:4px solid #222"></div>
<div class="abs upd" style="left:597px;top:642px">Update</div>
<div class="abs dv" style="left:632px;top:611px">12000 Furnishings</div>
<div class="abs fb" style="left:753px;top:610px">Interior</div>
<div class="abs fi" style="left:760px;top:624px"># Restroom</div>
<div class="abs" style="left:760px;top:642px;height:3px;overflow:hidden"><div class="fi" style="position:relative;top:-0px"># Shower</div></div>
<div class="abs" style="left:911px;top:609px;width:9px;height:33px;border-radius:5px;background:#eef0f3"></div>
<div class="abs" style="left:911px;top:609px;width:9px;height:25px;border-radius:5px;background:#c8ccd4"></div>
<div class="abs cell" style="left:926px;top:619px;width:58px;text-align:center">4</div>
<svg class="abs" style="left:990px;top:620px" width="14" height="14" viewBox="0 0 14 14"><rect x="1.5" y="1.6" width="11.4" height="11.4" rx="1.6" fill="#fff" stroke="#5d6c8c" stroke-width="1.2"/><rect x="2.1" y="2.2" width="10.2" height="2.6" fill="#c9d1de"/><path d="M3 5.2h8.4" stroke="#5d6c8c" stroke-width="1"/><path d="M2.8 7.2h1M5.2 7.2h1M7.3 7.2h1.6M10 7.2h1M2.8 9h1M5.2 9h1M7.3 9h1.6M10 9h1M2.8 10.8h1M5.2 10.8h1" stroke="#8a97b2" stroke-width=".9"/></svg>
<div class="abs cell" style="left:1011px;top:619px;width:147px;text-align:center">XO-106</div>
<div class="abs cell" style="left:1160px;top:619px;width:148px;text-align:center">MAILBOX</div>
<div class="abs cell" style="left:1310px;top:619px;width:147px;text-align:center;white-space:nowrap">CB2</div>
<div class="abs" style="left:339px;top:657px;width:243px;height:2px;background:#eceef2"></div>
<div class="abs" style="left:587px;top:657px;width:928px;height:2px;background:#eceef2"></div>
<div class="abs" style="left:401px;top:673px;width:15px;height:15px;border:1.5px solid #d0d5df;border-radius:4px;background:#fff"></div>
<div class="abs" style="left:435px;top:658px;width:147px;height:64px"><svg class="abs" style="left:19px;top:3px" width="105" height="58" viewBox="0 0 105 58">
<defs><linearGradient id="fl" x1="0" y1="0" x2="0" y2="1"><stop offset="0" stop-color="#d09158"/><stop offset="1" stop-color="#b0733f"/></linearGradient></defs>
<rect width="105" height="58" fill="#6f7375"/>
<rect y="0" width="105" height="14" fill="#858b8d"/>
<rect y="14" width="105" height="21" fill="#55595a"/>
<path d="M22 0V14M31 0V14M92 0V14" stroke="#3e4244" stroke-width="1.5"/>
<rect y="35" width="105" height="23" fill="url(#fl)"/>
<path d="M24 6.5 96 8.5 86 15H8z" fill="#a9a9a1"/>
<rect x="8" y="15" width="78" height="11" fill="#d3d3c8"/>
<path d="M86 15 96 8.5V20L86 26z" fill="#8f8f88"/>
<rect x="32" y="26" width="45" height="23.5" fill="#a2a29a"/>
<rect x="70" y="26" width="7" height="23.5" fill="#7e7e78"/>
</svg></div>
<svg class="abs" style="left:593px;top:669px" width="30" height="30" viewBox="0 0 30 30"><path d="M1.2 1.2H22.4V8.6A3.7 3.7 0 1 1 22.4 15.2V22.4H15.2A3.7 3.7 0 1 1 8.6 22.4H1.2z" fill="#eceef3" stroke="#e0e3e9" stroke-width="1"/><path d="M7.3 17V6.5h6.5M7.3 11.6h5.6" fill="none" stroke="#8c93a4" stroke-width="2.1"/><path d="M16.5 14.2v4.6M14.2 16.5h4.6" stroke="#8c93a4" stroke-width="1.5"/></svg>
<div class="abs" style="left:587px;top:709px;width:0;height:0;border-left:3.5px solid transparent;border-right:3.5px solid transparent;border-top:4px solid #222"></div>
<div class="abs upd" style="left:597px;top:706px">Update</div>
<div class="abs dv" style="left:632px;top:675px">12000 Furnishings</div>
<div class="abs fb" style="left:753px;top:674px">Exterior</div>
<div class="abs fi" style="left:760px;top:688px"># Terrace/Entrance</div>
<div class="abs cell" style="left:926px;top:683px;width:58px;text-align:center">1</div>
<svg class="abs" style="left:990px;top:684px" width="14" height="14" viewBox="0 0 14 14"><rect x="1.5" y="1.6" width="11.4" height="11.4" rx="1.6" fill="#fff" stroke="#5d6c8c" stroke-width="1.2"/><rect x="2.1" y="2.2" width="10.2" height="2.6" fill="#c9d1de"/><path d="M3 5.2h8.4" stroke="#5d6c8c" stroke-width="1"/><path d="M2.8 7.2h1M5.2 7.2h1M7.3 7.2h1.6M10 7.2h1M2.8 9h1M5.2 9h1M7.3 9h1.6M10 9h1M2.8 10.8h1M5.2 10.8h1" stroke="#8a97b2" stroke-width=".9"/></svg>
<div class="abs cell ml" style="left:1011px;top:683px;width:147px;text-align:center">XO-208</div>
<div class="abs cell ml" style="left:1160px;top:678px;width:148px;text-align:center;line-height:12px">OUTDOOR COFFEE<br>TABLE</div>
<div class="abs cell" style="left:1310px;top:683px;width:147px;text-align:center;white-space:nowrap">ELEMENT</div>
<div class="abs" style="left:339px;top:721px;width:243px;height:2px;background:#eceef2"></div>
<div class="abs" style="left:587px;top:721px;width:928px;height:2px;background:#eceef2"></div>
<div class="abs" style="left:401px;top:737px;width:15px;height:15px;border:1.5px solid #d0d5df;border-radius:4px;background:#fff"></div>
<div class="abs" style="left:435px;top:722px;width:147px;height:64px"><svg class="abs" style="left:43px;top:3px" width="58" height="58" viewBox="0 0 58 58">
<rect width="58" height="58" fill="#e4e2da"/>
<g stroke="#c9c6bb" stroke-width=".8"><path d="M0 14H58M0 28H58M0 41.5H58M45.5 0V14M45 28V41.5M48 41.5V58"/></g>
<g fill="none" stroke="#b9b29c" stroke-width="2.6" transform="translate(4 1.5)" opacity=".75">
<path d="M6 22.5Q7.5 18 11.5 18Q16 18.5 15.8 23Q15.5 26.5 6.5 38H17"/><path d="M31 38V18.5L21.5 32.5H35"/><path d="M41 18.5H52.5L43.5 38.5"/></g>
<g fill="none" stroke="#1d1d1d" stroke-width="2.1">
<path d="M6 22.5Q7.5 18 11.5 18Q16 18.5 15.8 23Q15.5 26.5 6.5 38H17"/><path d="M31 38V18.5L21.5 32.5H35"/><path d="M41 18.5H52.5L43.5 38.5"/></g>
<path d="M0 58V31Q2 36 4 33Q3 42 8 41Q4 47 9 50Q6 54 12 58z" fill="#8fae6a" opacity=".6"/>
</svg></div>
<svg class="abs" style="left:593px;top:733px" width="30" height="30" viewBox="0 0 30 30"><path d="M1.2 1.2H22.4V8.6A3.7 3.7 0 1 1 22.4 15.2V22.4H15.2A3.7 3.7 0 1 1 8.6 22.4H1.2z" fill="#eceef3" stroke="#e0e3e9" stroke-width="1"/><path d="M7.3 17V6.5h6.5M7.3 11.6h5.6" fill="none" stroke="#8c93a4" stroke-width="2.1"/><path d="M16.5 14.2v4.6M14.2 16.5h4.6" stroke="#8c93a4" stroke-width="1.5"/></svg>
<div class="abs" style="left:587px;top:773px;width:0;height:0;border-left:3.5px solid transparent;border-right:3.5px solid transparent;border-top:4px solid #222"></div>
<div class="abs upd" style="left:597px;top:770px">Update</div>
<div class="abs dv" style="left:632px;top:739px">12000 Furnishings</div>
<div class="abs fb" style="left:753px;top:738px">Exterior</div>
<div class="abs fi" style="left:760px;top:752px"># Terrace/Entrance</div>
<div class="abs" style="left:911px;top:737px;width:9px;height:33px;border-radius:5px;background:#eef0f3"></div>
<div class="abs" style="left:911px;top:737px;width:9px;height:17px;border-radius:5px;background:#c8ccd4"></div>
<div class="abs cell" style="left:926px;top:747px;width:58px;text-align:center">6</div>
<svg class="abs" style="left:990px;top:748px" width="14" height="14" viewBox="0 0 14 14"><rect x="1.5" y="1.6" width="11.4" height="11.4" rx="1.6" fill="#fff" stroke="#5d6c8c" stroke-width="1.2"/><rect x="2.1" y="2.2" width="10.2" height="2.6" fill="#c9d1de"/><path d="M3 5.2h8.4" stroke="#5d6c8c" stroke-width="1"/><path d="M2.8 7.2h1M5.2 7.2h1M7.3 7.2h1.6M10 7.2h1M2.8 9h1M5.2 9h1M7.3 9h1.6M10 9h1M2.8 10.8h1M5.2 10.8h1" stroke="#8a97b2" stroke-width=".9"/></svg>
<div class="abs cell" style="left:1011px;top:747px;width:147px;text-align:center">XO-107</div>
<div class="abs cell" style="left:1160px;top:747px;width:148px;text-align:center">LETTERING</div>
<div class="abs cell" style="left:1310px;top:747px;width:147px;text-align:center;white-space:nowrap">CB2</div>
<div class="abs" style="left:339px;top:785px;width:243px;height:2px;background:#eceef2"></div>
<div class="abs" style="left:587px;top:785px;width:928px;height:2px;background:#eceef2"></div>
<div class="abs" style="left:401px;top:801px;width:15px;height:15px;border:1.5px solid #d0d5df;border-radius:4px;background:#fff"></div>
<div class="abs" style="left:435px;top:786px;width:147px;height:64px"><svg class="abs" style="left:39px;top:4px" width="66" height="54" viewBox="0 0 66 54">
<ellipse cx="36" cy="48.5" rx="28" ry="3.5" fill="#e6e6e6"/>
<path d="M17.5 18 17 8.6 26 4" fill="none" stroke="#c9c9c9" stroke-width=".9"/>
<path d="M24.5 1 27.5 0.5 30 7.5 25.5 8z" fill="#6e6e6e"/>
<rect x="17" y="13.2" width="13.7" height="4.8" fill="#8b6c4d"/>
<path d="M2 24V47M51.3 24V52M64.4 24V48M20.7 37.5 51.3 39.5M51.3 43 64.4 40" stroke="#a8a8a8" stroke-width="1"/>
<rect x="1.8" y="20.4" width="62.6" height="4.1" fill="#2b2b2b"/>
<rect x="2.9" y="25.2" width="17.8" height="18.2" fill="#8a6b4c"/>
<rect x="12" y="25.2" width="8.7" height="18.2" fill="#3e2e22"/>
</svg></div>
<svg class="abs" style="left:593px;top:797px" width="30" height="30" viewBox="0 0 30 30"><path d="M1.2 1.2H22.4V8.6A3.7 3.7 0 1 1 22.4 15.2V22.4H15.2A3.7 3.7 0 1 1 8.6 22.4H1.2z" fill="#eceef3" stroke="#e0e3e9" stroke-width="1"/><path d="M7.3 17V6.5h6.5M7.3 11.6h5.6" fill="none" stroke="#8c93a4" stroke-width="2.1"/><path d="M16.5 14.2v4.6M14.2 16.5h4.6" stroke="#8c93a4" stroke-width="1.5"/></svg>
<div class="abs" style="left:587px;top:837px;width:0;height:0;border-left:3.5px solid transparent;border-right:3.5px solid transparent;border-top:4px solid #222"></div>
<div class="abs upd" style="left:597px;top:834px">Update</div>
<div class="abs dv" style="left:632px;top:803px">12000 Furnishings</div>
<div class="abs fb" style="left:753px;top:802px">Interior</div>
<div class="abs fi" style="left:760px;top:816px"># Lobby</div>
<div class="abs" style="left:760px;top:834px;height:3px;overflow:hidden"><div class="fi" style="position:relative;top:-0px"># Office</div></div>
<div class="abs" style="left:911px;top:801px;width:9px;height:33px;border-radius:5px;background:#eef0f3"></div>
<div class="abs" style="left:911px;top:801px;width:9px;height:25px;border-radius:5px;background:#c8ccd4"></div>
<div class="abs cell" style="left:926px;top:811px;width:58px;text-align:center">3</div>
<svg class="abs" style="left:990px;top:812px" width="14" height="14" viewBox="0 0 14 14"><rect x="1.5" y="1.6" width="11.4" height="11.4" rx="1.6" fill="#fff" stroke="#5d6c8c" stroke-width="1.2"/><rect x="2.1" y="2.2" width="10.2" height="2.6" fill="#c9d1de"/><path d="M3 5.2h8.4" stroke="#5d6c8c" stroke-width="1"/><path d="M2.8 7.2h1M5.2 7.2h1M7.3 7.2h1.6M10 7.2h1M2.8 9h1M5.2 9h1M7.3 9h1.6M10 9h1M2.8 10.8h1M5.2 10.8h1" stroke="#8a97b2" stroke-width=".9"/></svg>
<div class="abs cell" style="left:1011px;top:811px;width:147px;text-align:center">XO-103</div>
<div class="abs cell" style="left:1160px;top:811px;width:148px;text-align:center">DESK</div>
<div class="abs cell" style="left:1310px;top:811px;width:147px;text-align:center;white-space:nowrap">CARL HANSEN &amp; SON</div>
<div class="abs cell" style="left:1470px;top:806px">AJ52-</div>
<div class="abs" style="left:339px;top:849px;width:243px;height:2px;background:#eceef2"></div>
<div class="abs" style="left:583px;top:210px;width:2px;height:641px;background:#e3e5ea"></div>
<div class="abs" style="left:587px;top:842px;width:928px;height:9px;background:#eef0f3"></div>
<div class="abs" style="left:587px;top:842px;width:95px;height:9px;border-radius:5px;background:#c8ccd4"></div>
</div>
<div class="abs" style="left:1505px;top:210px;width:10px;height:641px;background:#eef0f3;border-radius:4px"></div>
<div class="abs" style="left:1505px;top:533px;width:10px;height:152px;border-radius:5px;background:#c8ccd4"></div>
<!--TABLE END-->

</body></html>
